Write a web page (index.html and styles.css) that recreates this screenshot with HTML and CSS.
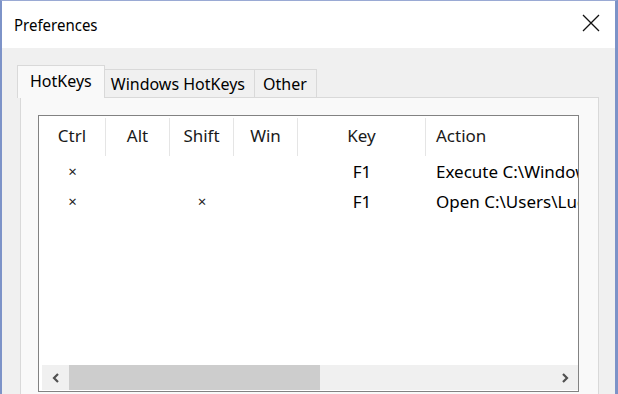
FILE: index.html
```html
<!DOCTYPE html>
<html>
<head>
<meta charset="utf-8">
<link rel="stylesheet" href="styles.css">
</head>
<body>
<div class="window">
  <div class="titlebar">
    <span class="title">Preferences</span>
    <svg class="close" width="18" height="18" viewBox="0 0 18 18"><path d="M1 1L17 17M17 1L1 17" stroke="#111" stroke-width="1.3" fill="none"/></svg>
  </div>
  <div class="content">
    <div class="tabs">
      <div class="tab active">HotKeys</div>
      <div class="tab">Windows HotKeys</div>
      <div class="tab">Other</div>
    </div>
    <div class="panel">
      <div class="listview">
        <div class="header">
          <div class="col c-ctrl">Ctrl</div>
          <div class="col c-alt">Alt</div>
          <div class="col c-shift">Shift</div>
          <div class="col c-win">Win</div>
          <div class="col c-key">Key</div>
          <div class="col c-action">Action</div>
        </div>
        <div class="row">
          <div class="cell c-ctrl x">×</div>
          <div class="cell c-alt"></div>
          <div class="cell c-shift"></div>
          <div class="cell c-win"></div>
          <div class="cell c-key">F1</div>
          <div class="cell c-action">Execute C:\Windows\notepad.exe</div>
        </div>
        <div class="row">
          <div class="cell c-ctrl x">×</div>
          <div class="cell c-alt"></div>
          <div class="cell c-shift x">×</div>
          <div class="cell c-win"></div>
          <div class="cell c-key">F1</div>
          <div class="cell c-action">Open C:\Users\Lucas\Documents</div>
        </div>
        <div class="spacer"></div>
        <div class="hscroll">
          <div class="arrow">
            <svg width="12" height="12" viewBox="0 0 12 12"><path d="M8 2L4 6L8 10" stroke="#505050" stroke-width="2.2" fill="none"/></svg>
          </div>
          <div class="track"><div class="thumb"></div></div>
          <div class="arrow">
            <svg width="12" height="12" viewBox="0 0 12 12"><path d="M4 2L8 6L4 10" stroke="#505050" stroke-width="2.2" fill="none"/></svg>
          </div>
        </div>
      </div>
    </div>
  </div>
</div>
</body>
</html>
```
FILE: styles.css
```css
html, body {
  margin: 0;
  padding: 0;
  width: 618px;
  height: 394px;
  overflow: hidden;
  background: #f0f0f0;
  font-family: "Noto Sans", "Open Sans", sans-serif;
  color: #000;
}
.window {
  box-sizing: border-box;
  width: 618px;
  height: 394px;
  border-left: 2px solid #7d93c8;
  border-right: 3px solid #7d93c8;
  border-top: 1px solid #9aaad4;
  display: flex;
  flex-direction: column;
  background: #f0f0f0;
}
.titlebar {
  height: 47px;
  background: #fff;
  display: flex;
  align-items: center;
  justify-content: space-between;
  padding: 0 15px 0 12px;
  flex-shrink: 0;
}
.title {
  font-size: 15px;
  margin-top: -2px;
  transform: scaleY(1.1);
}
.close { margin-top: -3px; }
.content {
  flex: 1;
  padding: 17px 16px 0 15px;
  display: flex;
  flex-direction: column;
  min-height: 0;
}
.tabs {
  display: flex;
  align-items: flex-end;
  height: 32px;
  position: relative;
  z-index: 2;
}
.tab {
  box-sizing: border-box;
  height: 28px;
  border: 1px solid #d9d9d9;
  border-bottom: none;
  background: #f0f0f0;
  font-size: 16px;
  padding: 0 6px;
  display: flex;
  align-items: center;
  margin-left: -1px;
}
.tab.active {
  height: 33px;
  margin-bottom: -1px;
  background: #f9f9f9;
  padding: 0 12px 2px 12px;
  margin-left: 0;
  margin-right: -1px;
  z-index: 3;
  position: relative;
}
.tab:nth-child(2) { margin-left: 0; padding: 0 9px 0 6px; }
.tab:nth-child(3) { padding: 0 9px 0 8px; }
.panel {
  flex: 1;
  margin-left: 3px;
  border: 1px solid #d9d9d9;
  border-bottom: none;
  background: #f9f9f9;
  padding: 17px 19px 0 17px;
  display: flex;
  flex-direction: column;
  min-height: 0;
}
.listview {
  box-sizing: border-box;
  height: 277px;
  background: #fff;
  border: 1px solid #828282;
  display: flex;
  flex-direction: column;
  overflow: hidden;
  flex-shrink: 0;
}
.header, .row {
  display: flex;
  white-space: nowrap;
}
.header { height: 40px; }
.row { height: 30px; }
.col, .cell {
  box-sizing: border-box;
  flex-shrink: 0;
  font-size: 17px;
  display: flex;
  align-items: center;
  justify-content: center;
}
.col {
  border-right: 1px solid #e5e5e5;
  margin: 2px 0 0;
  padding-bottom: 3px;
  color: #1a1a1a;
}
.c-ctrl { width: 67px; }
.c-alt { width: 64px; }
.c-shift { width: 64px; }
.c-win { width: 64px; }
.c-key { width: 128px; }
.c-action { width: 160px; justify-content: flex-start; padding-left: 10px; border-right: none; }
.cell.x { font-size: 15px; color: #222; }
.spacer { flex: 1; }
.hscroll {
  height: 25px;
  display: flex;
  background: #f0f0f0;
  margin: 0 0 1px 3px;
}
.arrow {
  width: 27px;
  display: flex;
  align-items: center;
  justify-content: center;
  flex-shrink: 0;
}
.track {
  flex: 1;
  display: flex;
  align-items: stretch;
}
.thumb {
  width: 251px;
  background: #cdcdcd;
}
```
